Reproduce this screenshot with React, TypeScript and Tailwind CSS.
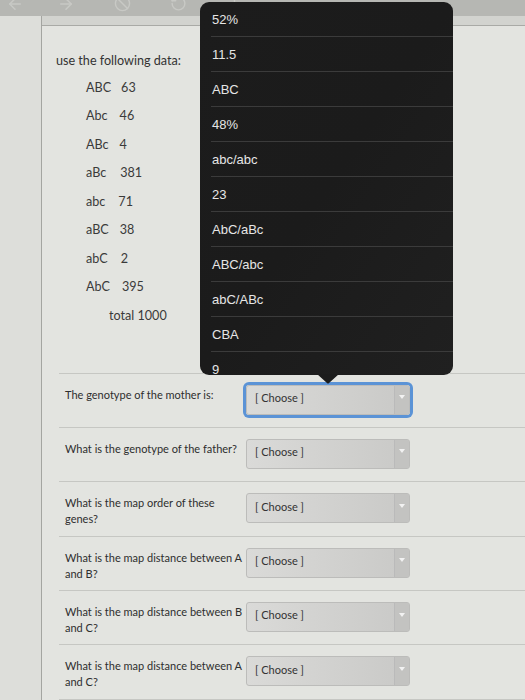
import { ArrowLeft, ArrowRight, Ban, RotateCcw, Share } from "lucide-react";

const data = [
  ["ABC", "63", "ml-[10px]"],
  ["Abc", "46", "ml-[12px]"],
  ["ABc", "4", "ml-[11px]"],
  ["aBc", "381", "ml-[14px]"],
  ["abc", "71", "ml-[13px]"],
  ["aBC", "38", "ml-[11px]"],
  ["abC", "2", "ml-[13px]"],
  ["AbC", "395", "ml-[12px]"],
];

const options = [
  "52%",
  "11.5",
  "ABC",
  "48%",
  "abc/abc",
  "23",
  "AbC/aBc",
  "ABC/abc",
  "abC/ABc",
  "CBA",
  "9",
];

const questions = [
  "The genotype of the mother is:",
  "What is the genotype of the father?",
  "What is the map order of these genes?",
  "What is the map distance between A and B?",
  "What is the map distance between B and C?",
  "What is the map distance between A and C?",
];

const Select = ({ focused }: { focused?: boolean }) => (
  <div
    className={
      "mt-[11px] flex h-[30px] w-[164px] shrink-0 overflow-hidden rounded-[3px] border border-[#bcbcba] bg-gradient-to-r from-[#dadad8] to-[#c9c9c7] " +
      (focused ? "ring-[3px] ring-[#5b93d6]" : "")
    }
  >
    <div className="flex flex-1 items-center pb-[3px] pl-[8px] text-[11px] text-[#333]">
      [ Choose ]
    </div>
    <div className="flex w-[15px] items-center justify-center border-l border-[#bababa] bg-[#c3c3c1]">
      <svg width="6" height="5" viewBox="0 0 6 5" className="mb-[4px]">
        <path d="M0 0 L6 0 L3 4 Z" fill="#f2f2f2" />
      </svg>
    </div>
  </div>
);

export default function App() {
  return (
    <div
      className="relative h-[700px] w-[525px] overflow-hidden bg-[#e3e4e0]"
      style={{ fontFamily: "Lato, 'Open Sans', sans-serif" }}
    >
      {/* browser toolbar */}
      <div className="relative h-[16px] bg-[#b6b7b3]">
        <ArrowLeft className="absolute left-[6px] top-[-5px] text-[#c8c9c5]" size={18} />
        <ArrowRight className="absolute left-[57px] top-[-5px] text-[#c8c9c5]" size={18} />
        <Ban className="absolute left-[114px] top-[-5px] text-[#c8c9c5]" size={17} />
        <RotateCcw className="absolute left-[170px] top-[-5px] text-[#c8c9c5]" size={17} />
        <Share className="absolute left-[226px] top-[-5px] text-[#c8c9c5]" size={17} />
      </div>

      <div className="flex h-[684px]">
        <div className="w-[42px] shrink-0 border-r border-[#a4a5a1] bg-[#dddeda]" />
        <div className="flex-1">
          <div className="h-[10px] border-b border-[#a9aaa6] bg-[#d2d3cf]" />

          <div className="pl-[14px] pt-[25px]">
            <div className="h-[20px] text-[12.6px] leading-[20px] text-[#333]">
              use the following data:
            </div>
            <div className="mt-[3px] pl-[30px] text-[12.6px] text-[#3a3a3a]">
              {data.map(([g, n, gap]) => (
                <div key={g} className="flex h-[28.5px] items-center">
                  <span>{g}</span>
                  <span className={gap}>{n}</span>
                </div>
              ))}
              <div className="flex h-[28.5px] items-center pl-[23px]">total 1000</div>
            </div>
          </div>

          <div className="ml-[17px] mt-[42px]">
            {questions.map((q, i) => (
              <div
                key={q}
                className="flex h-[54.4px] items-start border-t border-[#c6c7c3]"
              >
                <div className="w-[187px] shrink-0 pl-[6px] pt-[13px] text-[11px] leading-[16px] text-[#2e2e2e]">
                  {q}
                </div>
                <Select focused={i === 0} />
              </div>
            ))}
            <div className="border-t border-[#c6c7c3]" />
          </div>
        </div>
      </div>

      {/* dropdown popover */}
      <div className="absolute left-[200px] top-[2px] h-[373px] w-[253px] overflow-hidden rounded-[9px] bg-gradient-to-br from-[#1c1c1c] via-[#1b1b1b] to-[#202020]">
        {options.map((o) => (
          <div
            key={o}
            className="ml-[11px] flex h-[35px] items-center border-b border-[#3b3b3b] pl-[1px] pt-[1px] text-[13px] text-[#e6e6e6]"
            style={{ fontFamily: "'Liberation Sans', Arial, sans-serif" }}
          >
            {o}
          </div>
        ))}
      </div>
      <svg
        className="absolute left-[317px] top-[374px]"
        width="22"
        height="10"
        viewBox="0 0 22 10"
      >
        <path d="M0 0 L22 0 L12 9 Q11 10 10 9 Z" fill="#1c1c1c" />
      </svg>
    </div>
  );
}
